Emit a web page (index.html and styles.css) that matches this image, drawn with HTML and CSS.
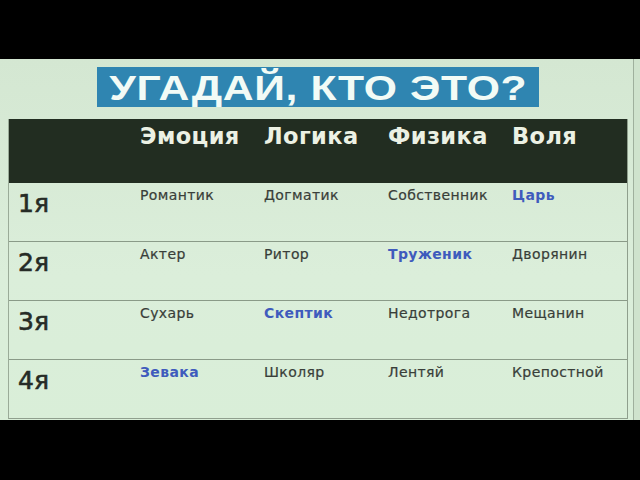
FILE: index.html
```html
<!DOCTYPE html>
<html lang="ru">
<head>
<meta charset="utf-8">
<title>Угадай, кто это?</title>
<link rel="stylesheet" href="styles.css">
</head>
<body>
<div class="screen">
  <div class="bar-top"></div>
  <div class="slide">
    <div class="title-wrap"><h1 class="title"><span class="title-text">УГАДАЙ, КТО ЭТО?</span></h1></div>
    <div class="table">
      <div class="row head">
        <div class="cell label"></div>
        <div class="cell">Эмоция</div>
        <div class="cell">Логика</div>
        <div class="cell">Физика</div>
        <div class="cell">Воля</div>
      </div>
      <div class="row">
        <div class="cell label">1я</div>
        <div class="cell">Романтик</div>
        <div class="cell">Догматик</div>
        <div class="cell">Собственник</div>
        <div class="cell hl">Царь</div>
      </div>
      <div class="row">
        <div class="cell label">2я</div>
        <div class="cell">Актер</div>
        <div class="cell">Ритор</div>
        <div class="cell hl">Труженик</div>
        <div class="cell">Дворянин</div>
      </div>
      <div class="row">
        <div class="cell label">3я</div>
        <div class="cell">Сухарь</div>
        <div class="cell hl">Скептик</div>
        <div class="cell">Недотрога</div>
        <div class="cell">Мещанин</div>
      </div>
      <div class="row last">
        <div class="cell label">4я</div>
        <div class="cell hl">Зевака</div>
        <div class="cell">Школяр</div>
        <div class="cell">Лентяй</div>
        <div class="cell">Крепостной</div>
      </div>
    </div>
  </div>
  <div class="bar-bottom"></div>
</div>
</body>
</html>
```

FILE: styles.css
```css
html, body {
  margin: 0;
  padding: 0;
  background: #000;
}

.screen {
  width: 640px;
  height: 480px;
  display: flex;
  flex-direction: column;
  background: #000;
  overflow: hidden;
}

.bar-top {
  height: 59px;
  flex: none;
}

.slide {
  height: 361px;
  flex: none;
  box-sizing: border-box;
  background: linear-gradient(180deg, #d4e7d2 0%, #dbeeda 60%, #d9eed8 100%);
  padding: 8px 3px 0 8px;
  display: flex;
  flex-direction: column;
  border-right: 6px solid #cfe3cd;
  box-shadow: inset -1px 0 0 #9fb09d;
}

.title-wrap {
  display: flex;
  justify-content: center;
  padding-right: 3px;
}

.title {
  margin: 0;
  height: 40px;
  width: 442px;
  box-sizing: border-box;
  background: #2f85b1;
  color: #f2fbf6;
  font-family: "Liberation Sans", Arial, sans-serif;
  font-weight: bold;
  font-size: 35px;
  line-height: 42px;
  text-align: center;
  overflow: hidden;
}

.title-text {
  display: inline-block;
  letter-spacing: 0.5px;
  transform: scaleX(1.22);
  transform-origin: center;
}

.table {
  margin-top: 12px;
  width: 620px;
  border-left: 1px solid #9aab98;
  border-right: 1px solid #8f9f8d;
  border-bottom: 1px solid #8f9f8d;
  box-sizing: border-box;
  font-family: "DejaVu Sans", Verdana, sans-serif;
}

.row {
  display: grid;
  grid-template-columns: 131px 124px 124px 124px 1fr;
  height: 59px;
  box-sizing: border-box;
  border-bottom: 1px solid #8a9a88;
}

.row.last {
  border-bottom: none;
  height: 58px;
}

.row.head {
  height: 64px;
  background: #222d21;
  border-bottom: none;
}

.cell {
  font-size: 14px;
  letter-spacing: 0.4px;
  color: #393e39;
  padding-top: 4px;
  white-space: nowrap;
  -webkit-text-stroke: 0.2px #393e39;
}

.head .cell {
  font-size: 22.5px;
  font-weight: bold;
  letter-spacing: 0.4px;
  color: #ecf1e4;
  -webkit-text-stroke: 0;
  padding-top: 4px;
}

.cell.label {
  font-family: "DejaVu Sans", Verdana, sans-serif;
  font-size: 25px;
  letter-spacing: 0;
  color: #262b26;
  -webkit-text-stroke: 0.6px #262b26;
  padding-left: 9px;
  padding-top: 6px;
}

.cell.hl {
  color: #3f5bbd;
  -webkit-text-stroke: 0;
  font-weight: bold;
}
```
